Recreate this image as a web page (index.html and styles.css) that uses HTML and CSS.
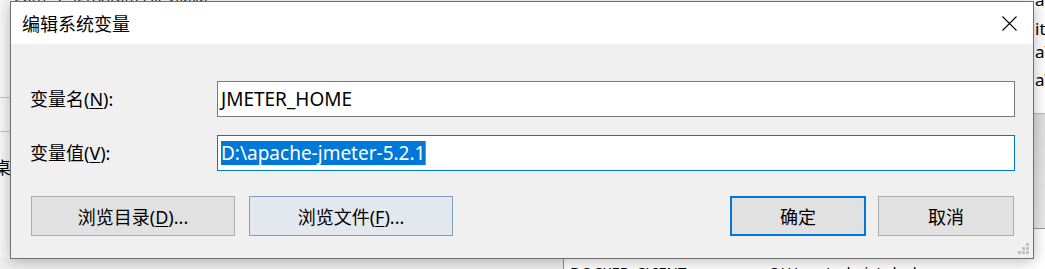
FILE: index.html
```html
<!DOCTYPE html>
<html lang="zh-CN">
<head>
  <meta charset="UTF-8">
  <title>编辑系统变量</title>
  <link rel="stylesheet" href="styles.css">
</head>
<body>

  <div class="desktop">
    <div class="bg-top">Path &nbsp; C:\Program Files\Java</div>
    <div class="bg-left">
      <span class="bg-line l1"></span>
      <span class="bg-line l2"></span>
      <span class="bg-char">桌</span>
    </div>
    <div class="bg-right">
      <span class="r-txt t1">a</span>
      <span class="r-txt t2">ity</span>
      <span class="r-txt t3">aV</span>
      <span class="r-txt t4">aV</span>
      <div class="r-panel"></div>
    </div>
    <div class="bg-bottom">
      <div class="b-grey"></div>
      <div class="b-text">DOCKER_CLIENT &nbsp; &nbsp; &nbsp; &nbsp; &nbsp; &nbsp; &nbsp; &nbsp; &nbsp; &nbsp; C:\Users\admin\.docker</div>
    </div>

    <div class="dialog">
      <div class="titlebar">
        <span class="title">编辑系统变量</span>
        <svg class="close" width="15" height="15" viewBox="0 0 15 15">
          <path d="M0.5 0.5 L14.5 14.5 M14.5 0.5 L0.5 14.5" stroke="#000" stroke-width="1.1" fill="none"/>
        </svg>
      </div>

      <div class="dialog-body">
        <div class="fields">
          <label class="lbl" for="varName">变量名(<u>N</u>):</label>
          <div class="input" id="varName">JMETER_HOME</div>

          <label class="lbl" for="varValue">变量值(<u>V</u>):</label>
          <div class="input focus" id="varValue"><span class="sel">D:\apache-jmeter-5.2.1</span></div>
        </div>

        <div class="buttons">
          <button class="btn">浏览目录(<u>D</u>)...</button>
          <button class="btn hover">浏览文件(<u>F</u>)...</button>
          <span class="spacer"></span>
          <button class="btn small default">确定</button>
          <button class="btn small">取消</button>
        </div>
      </div>

      <svg class="grip" width="12" height="12" viewBox="0 0 12 12">
        <rect x="8" y="0" width="3" height="3" fill="#c2c2c2"/>
        <rect x="4" y="4" width="3" height="3" fill="#c2c2c2"/>
        <rect x="8" y="4" width="3" height="3" fill="#c2c2c2"/>
        <rect x="0" y="8" width="3" height="3" fill="#c2c2c2"/>
        <rect x="4" y="8" width="3" height="3" fill="#c2c2c2"/>
        <rect x="8" y="8" width="3" height="3" fill="#c2c2c2"/>
      </svg>
    </div>
  </div>

</body>
</html>
```

FILE: styles.css
```css
* {
  box-sizing: border-box;
}

body {
  margin: 0;
  font-family: "Noto Sans", "Noto Sans CJK SC", sans-serif;
  background-color: #fff;
  color: #000;
  overflow: hidden;
}

.desktop {
  position: relative;
  width: 1045px;
  height: 269px;
  background-color: #fff;
}

/* fragments of the window behind the dialog */
.bg-top {
  position: absolute;
  left: 14px;
  top: -12px;
  font-size: 15px;
  color: #333;
}

.bg-left {
  position: absolute;
  left: 0;
  top: 0;
  width: 10px;
  height: 269px;
  background-color: #f7f7f7;
}

.bg-line {
  position: absolute;
  left: 0;
  width: 10px;
  height: 1px;
  background-color: #c8c8c8;
}

.l1 { top: 97px; }
.l2 { top: 131px; }

.bg-char {
  position: absolute;
  left: -6px;
  top: 154px;
  font-size: 17px;
}

.bg-right {
  position: absolute;
  left: 1034px;
  top: 0;
  width: 11px;
  height: 269px;
  background-color: #fff;
}

.r-txt {
  position: absolute;
  left: 1px;
  font-size: 17px;
  white-space: nowrap;
}

.t1 { top: -12px; }
.t2 { top: 17px; }
.t3 { top: 40px; }
.t4 { top: 68px; }

.r-panel {
  position: absolute;
  left: 0;
  top: 113px;
  width: 11px;
  height: 116px;
  background: linear-gradient(#dedede, #e9e9e9);
  border-top: 1px solid #bdbdbd;
  border-bottom: 1px solid #9a9a9a;
}

.bg-bottom {
  position: absolute;
  left: 0;
  top: 258px;
  width: 1045px;
  height: 11px;
  display: flex;
}

.b-grey {
  width: 564px;
  background-color: #efefef;
  border-right: 1px solid #8d8d8d;
}

.b-text {
  padding-left: 6px;
  margin-top: 4px;
  font-size: 15px;
  line-height: 20px;
  white-space: nowrap;
}

/* dialog window */
.dialog {
  position: absolute;
  left: 10px;
  top: 1px;
  width: 1024px;
  height: 258px;
  background-color: #f0f0f0;
  border: 1px solid #707070;
  box-shadow: 0 2px 14px rgba(0, 0, 0, 0.28);
  display: flex;
  flex-direction: column;
}

.titlebar {
  height: 42px;
  background-color: #fff;
  display: flex;
  align-items: center;
  padding: 0 16px 0 11px;
}

.title {
  font-size: 18px;
  flex: 1;
}

.close {
  margin-top: 1px;
}

.dialog-body {
  padding: 37px 18px 21px 19px;
}

.fields {
  display: grid;
  grid-template-columns: 187px 1fr;
  row-gap: 18px;
  align-items: center;
}

.lbl {
  font-size: 18px;
  margin-top: -2px;
}

.lbl u, .btn u {
  text-decoration-thickness: 1px;
  text-underline-offset: 2px;
}

.input {
  height: 36px;
  background-color: #fff;
  border: 1px solid #7a7a7a;
  padding: 0 3px;
  font-size: 19px;
  display: flex;
  align-items: center;
}

.input.focus {
  border-color: #0078d7;
}

.sel {
  background-color: #0078d7;
  color: #fff;
  line-height: 24px;
  border-right: 1px solid #e87a2a;
}

.buttons {
  display: flex;
  margin-top: 25px;
  margin-left: 1px;
}

.btn {
  width: 204px;
  height: 40px;
  font-family: inherit;
  font-size: 18px;
  color: #000;
  background-color: #e1e1e1;
  border: 1px solid #adadad;
  padding: 0;
  margin-right: 14px;
}

.btn.hover {
  background-color: #e2e8ee;
  border-color: #7c9fc2;
}

.spacer {
  flex: 1;
}

.btn.small {
  width: 136px;
  margin-right: 12px;
}

.btn.small:last-child {
  margin-right: 1px;
}

.btn.default {
  border: 2px solid #0078d7;
}

.grip {
  position: absolute;
  right: 3px;
  bottom: 3px;
}
```
